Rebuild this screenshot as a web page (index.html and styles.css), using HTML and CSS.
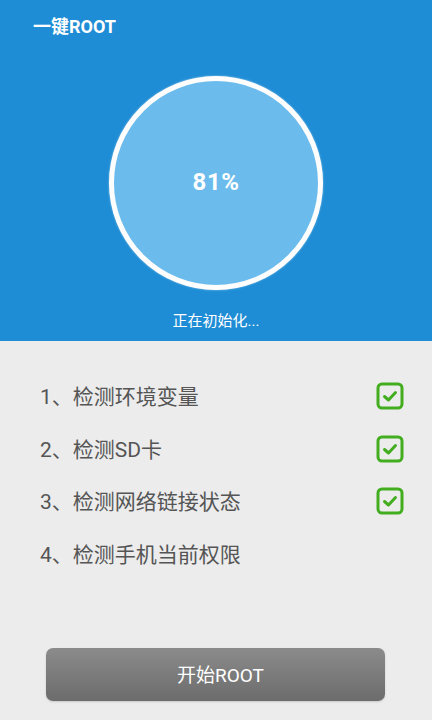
FILE: index.html
```html
<!DOCTYPE html>
<html>
<head>
<meta charset="utf-8">
<link rel="stylesheet" href="styles.css">
</head>
<body>
<div class="app">
  <header class="top">
    <div class="title">一键ROOT</div>
    <div class="ring-wrap">
      <div class="ring"><span class="pct">81%</span></div>
    </div>
    <div class="status">正在初始化...</div>
  </header>
  <main class="list">
    <div class="row"><span class="label">1、检测环境变量</span><span class="check"><svg viewBox="0 0 28 28" width="28" height="28"><rect x="2" y="2" width="24" height="24" rx="4" fill="none" stroke="#42ad1f" stroke-width="3"/><path d="M8.5 14.5 L12.5 18 L19.5 10.5" fill="none" stroke="#42ad1f" stroke-width="3" stroke-linecap="round" stroke-linejoin="round"/></svg></span></div>
    <div class="row"><span class="label">2、检测SD卡</span><span class="check"><svg viewBox="0 0 28 28" width="28" height="28"><rect x="2" y="2" width="24" height="24" rx="4" fill="none" stroke="#42ad1f" stroke-width="3"/><path d="M8.5 14.5 L12.5 18 L19.5 10.5" fill="none" stroke="#42ad1f" stroke-width="3" stroke-linecap="round" stroke-linejoin="round"/></svg></span></div>
    <div class="row"><span class="label">3、检测网络链接状态</span><span class="check"><svg viewBox="0 0 28 28" width="28" height="28"><rect x="2" y="2" width="24" height="24" rx="4" fill="none" stroke="#42ad1f" stroke-width="3"/><path d="M8.5 14.5 L12.5 18 L19.5 10.5" fill="none" stroke="#42ad1f" stroke-width="3" stroke-linecap="round" stroke-linejoin="round"/></svg></span></div>
    <div class="row"><span class="label">4、检测手机当前权限</span></div>
  </main>
  <div class="footer">
    <button class="btn">开始ROOT</button>
  </div>
</div>
</body>
</html>
```
FILE: styles.css
```css
* { box-sizing: border-box; }
html, body { margin: 0; padding: 0; }
body {
  width: 432px;
  height: 720px;
  background: #ececec;
  font-family: "Roboto", "Noto Sans CJK SC", sans-serif;
  overflow: hidden;
}
.app {
  display: flex;
  flex-direction: column;
  height: 720px;
}
.top {
  background: #1f8dd5;
  height: 341px;
  display: flex;
  flex-direction: column;
  align-items: center;
  padding-top: 15px;
}
.title {
  align-self: flex-start;
  margin-left: 33px;
  color: #fff;
  font-weight: bold;
  font-size: 18px;
  line-height: 24px;
}
.ring-wrap {
  margin-top: 37px;
}
.ring {
  width: 214px;
  height: 214px;
  border-radius: 50%;
  border: 5px solid #fdfdfd;
  background: #6bbced;
  display: flex;
  align-items: center;
  justify-content: center;
  padding-bottom: 2px;
  box-shadow: 0 0 2px rgba(255,255,255,0.6);
}
.pct {
  color: #fff;
  font-weight: bold;
  font-size: 24px;
  letter-spacing: 0.5px;
}
.status {
  margin-top: 21px;
  color: #fff;
  font-size: 15px;
  line-height: 20px;
}
.list {
  padding: 29px 28px 0 40px;
  flex: 1;
}
.row {
  height: 52.5px;
  display: flex;
  align-items: center;
  justify-content: space-between;
}
.label {
  color: #555;
  font-size: 21px;
  line-height: 28px;
  margin-top: 2px;
}
.check {
  width: 28px;
  height: 28px;
  display: flex;
}
.footer {
  padding: 0 47px 19px 46px;
}
.btn {
  width: 100%;
  height: 53px;
  border: none;
  border-radius: 7px;
  background: linear-gradient(#8b8b8b, #6c6c6c);
  color: #fff;
  font-family: "Roboto", "Noto Sans CJK SC", sans-serif;
  font-size: 19px;
  padding: 0 0 2px 10px;
  box-shadow: 0 1px 2px rgba(0,0,0,0.15);
}
```
